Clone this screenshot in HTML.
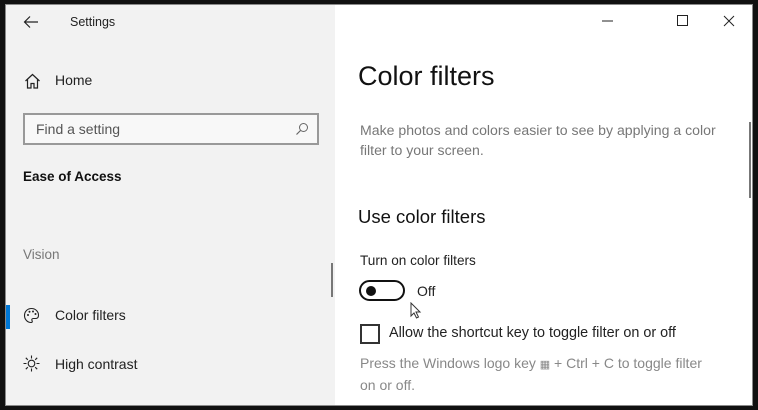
<!DOCTYPE html>
<html><head><meta charset="utf-8"><style>
*{margin:0;padding:0;box-sizing:border-box}
body{width:758px;height:410px;background:#111;position:relative;overflow:hidden;font-family:"Liberation Sans",sans-serif}
.win{position:absolute;left:5px;top:4px;width:748px;height:402px;background:#fff;border:1px solid #8a8a8a}
.left{position:absolute;left:0;top:0;width:329px;height:100%;background:#f2f2f2}
.t{position:absolute;white-space:nowrap}
</style></head><body>
<div class="win">
<div class="left">
 <svg class="t" style="left:17px;top:10px" width="16" height="14" viewBox="0 0 16 14"><path d="M15 7H2M7 1.5L1.5 7 7 12.5" fill="none" stroke="#222" stroke-width="1.2"/></svg>
 <div class="t" style="left:64px;top:10px;font-size:12.5px;color:#222">Settings</div>
 <svg class="t" style="left:18px;top:68px" width="17" height="16" viewBox="0 0 17 16"><path d="M1.5 8L8.5 1.5 15.5 8M3.5 6.5V15H7V10.5H10V15H13.5V6.5" fill="none" stroke="#222" stroke-width="1.2"/></svg>
 <div class="t" style="left:49px;top:67px;font-size:14px;color:#222">Home</div>
 <div class="t" style="left:17px;top:108px;width:296px;height:32px;border:2px solid #999;background:#f8f8f8"></div>
 <div class="t" style="left:30px;top:116px;font-size:14px;color:#555">Find a setting</div>
 <svg class="t" style="left:289px;top:117px" width="14" height="14" viewBox="0 0 14 14"><circle cx="8.5" cy="5.5" r="4" fill="none" stroke="#666" stroke-width="1"/><path d="M5.5 8.5L1.5 12.5" stroke="#666" stroke-width="1.2"/></svg>
 <div class="t" style="left:17px;top:164px;font-size:13.5px;font-weight:bold;color:#111">Ease of Access</div>
 <div class="t" style="left:17px;top:242px;font-size:13.5px;color:#777">Vision</div>
 <div class="t" style="left:325px;top:258px;width:2px;height:34px;background:#777"></div>
 <div class="t" style="left:0;top:300px;width:4px;height:24px;background:#0078d7"></div>
 <svg class="t" style="left:17px;top:302px" width="17" height="17" viewBox="0 0 17 17"><path d="M8.5 1.5C4.5 1.5 1.5 4.5 1.5 8.5s3 7 6.5 7c1.5 0 1.5-1.2 1-2-.6-1 0-2 1.3-2h2c2 0 3.2-1.3 3.2-3.3C15.5 4.5 12.5 1.5 8.5 1.5z" fill="none" stroke="#222" stroke-width="1.1"/><circle cx="5" cy="8" r="1" fill="#222"/><circle cx="6.5" cy="4.8" r="1" fill="#222"/><circle cx="10" cy="4.5" r="1" fill="#222"/><circle cx="12.5" cy="7" r="1" fill="#222"/></svg>
 <div class="t" style="left:49px;top:302px;font-size:14px;color:#222">Color filters</div>
 <svg class="t" style="left:17px;top:350px" width="17" height="17" viewBox="0 0 17 17"><circle cx="8.5" cy="8.5" r="3.3" fill="none" stroke="#222" stroke-width="1.1"/><path d="M8.5 0.5v3M8.5 13.5v3M0.5 8.5h3M13.5 8.5h3M2.8 2.8l2 2M12.2 12.2l2 2M2.8 14.2l2-2M12.2 4.8l2-2" stroke="#222" stroke-width="1.1"/></svg>
 <div class="t" style="left:49px;top:351px;font-size:14px;color:#222">High contrast</div>
</div>
<svg class="t" style="left:596px;top:15px" width="12" height="2"><path d="M0 1h11" stroke="#222"/></svg>
<div class="t" style="left:671px;top:10px;width:11px;height:11px;border:1px solid #222"></div>
<svg class="t" style="left:717px;top:10px" width="12" height="12" viewBox="0 0 12 12"><path d="M1 1l10 10M11 1L1 11" stroke="#222" stroke-width="1"/></svg>
<div class="t" style="left:743px;top:117px;width:2px;height:76px;background:#777"></div>
<div class="t" style="left:352px;top:56px;font-size:27px;color:#111">Color filters</div>
<div class="t" style="left:354px;top:115px;font-size:14.1px;line-height:20px;color:#777">Make photos and colors easier to see by applying a color<br>filter to your screen.</div>
<div class="t" style="left:352px;top:201px;font-size:18.5px;color:#111">Use color filters</div>
<div class="t" style="left:354px;top:248px;font-size:13.6px;color:#222">Turn on color filters</div>
<div class="t" style="left:353px;top:275px;width:46px;height:21px;border:2px solid #111;border-radius:11px"></div>
<div class="t" style="left:360px;top:281px;width:10px;height:10px;border-radius:50%;background:#111"></div>
<div class="t" style="left:411px;top:278px;font-size:14px;color:#222">Off</div>
<svg class="t" style="left:404px;top:297px" width="12" height="18" viewBox="0 0 12 18"><path d="M1 1v13l3-3 2.5 5 2-1-2.5-5h4z" fill="#fff" stroke="#333" stroke-width="1"/></svg>
<div class="t" style="left:354px;top:319px;width:20px;height:20px;border:2px solid #333"></div>
<div class="t" style="left:383px;top:320px;font-size:14.4px;color:#222">Allow the shortcut key to toggle filter on or off</div>
<div class="t" style="left:354px;top:348px;font-size:14px;line-height:20px;color:#888">Press the Windows logo key <span style="font-size:11px">&#9638;</span> + Ctrl + C to toggle filter<br>on or off.</div>
</div>
</body></html>
